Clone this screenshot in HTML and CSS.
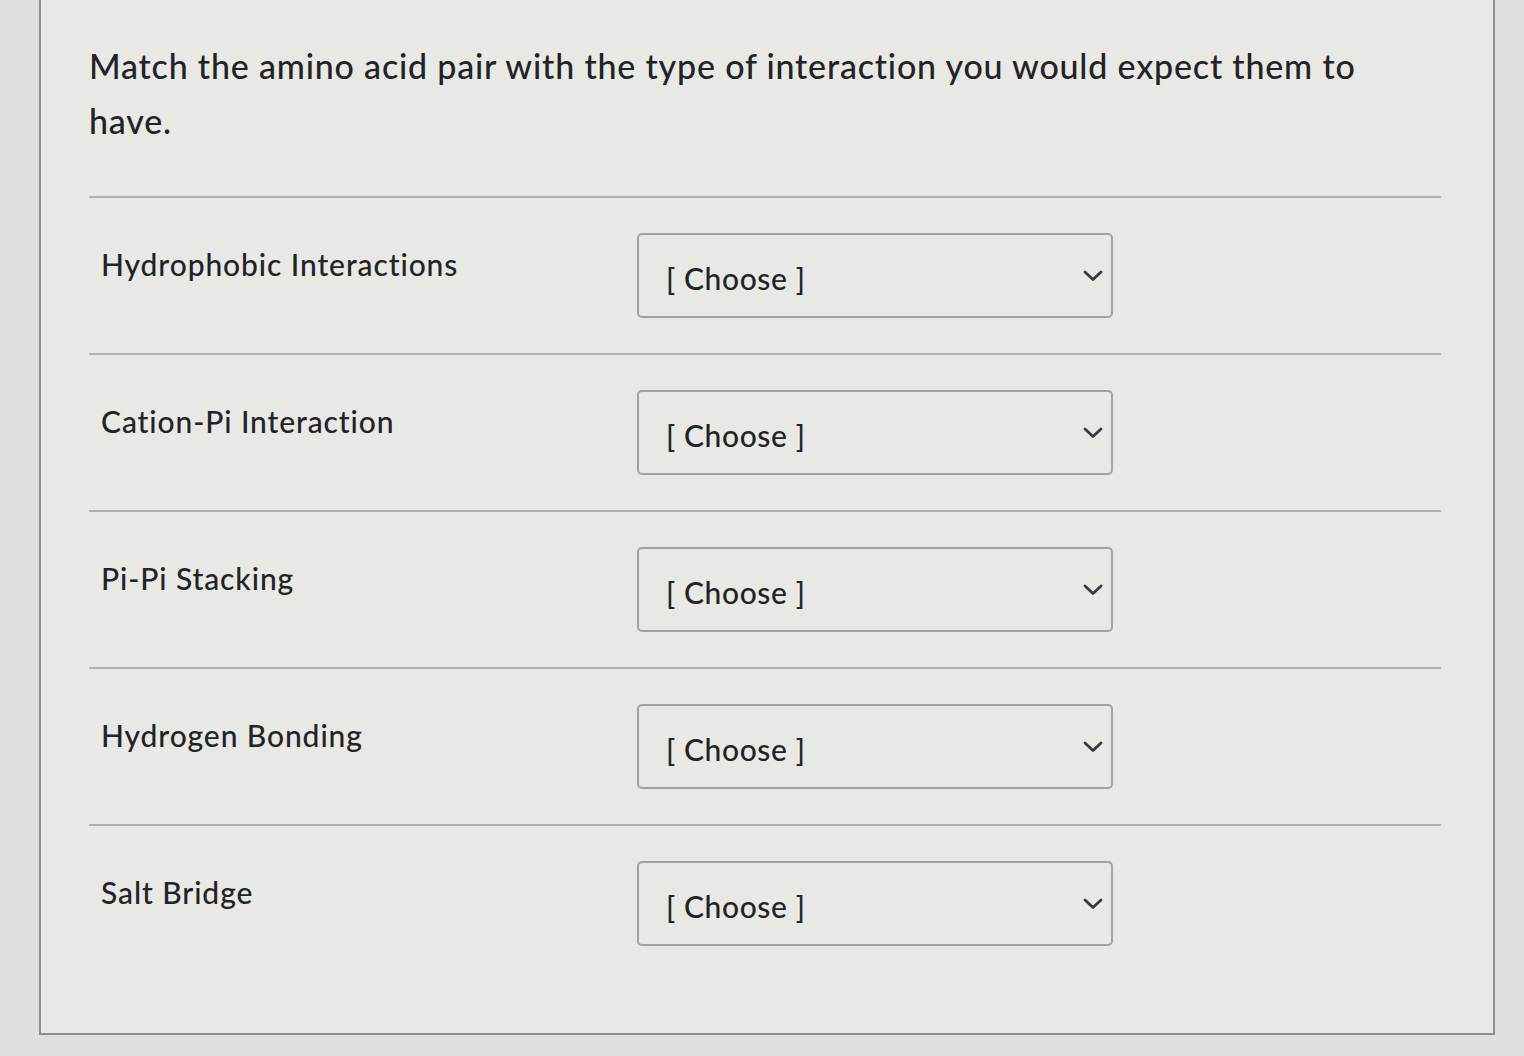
FILE: index.html
```html
<!DOCTYPE html>
<html lang="en">
<head>
<meta charset="utf-8">
<title>Matching question</title>
<link rel="stylesheet" href="styles.css">
</head>
<body>
  <div class="card">
    <div class="question">Match the amino acid pair with the type of interaction you would expect them to have.</div>
    <div class="answers">
      <div class="row">
        <div class="label">Hydrophobic Interactions</div>
        <div class="select"><span class="choose">[ Choose ]</span>
          <svg class="chev" viewBox="0 0 20 12" width="20" height="12"><path d="M2 2 L10 9.5 L18 2" fill="none" stroke="#383a42" stroke-width="2.8" stroke-linecap="round" stroke-linejoin="round"/></svg>
        </div>
      </div>
      <div class="row">
        <div class="label">Cation-Pi Interaction</div>
        <div class="select"><span class="choose">[ Choose ]</span>
          <svg class="chev" viewBox="0 0 20 12" width="20" height="12"><path d="M2 2 L10 9.5 L18 2" fill="none" stroke="#383a42" stroke-width="2.8" stroke-linecap="round" stroke-linejoin="round"/></svg>
        </div>
      </div>
      <div class="row">
        <div class="label">Pi-Pi Stacking</div>
        <div class="select"><span class="choose">[ Choose ]</span>
          <svg class="chev" viewBox="0 0 20 12" width="20" height="12"><path d="M2 2 L10 9.5 L18 2" fill="none" stroke="#383a42" stroke-width="2.8" stroke-linecap="round" stroke-linejoin="round"/></svg>
        </div>
      </div>
      <div class="row">
        <div class="label">Hydrogen Bonding</div>
        <div class="select"><span class="choose">[ Choose ]</span>
          <svg class="chev" viewBox="0 0 20 12" width="20" height="12"><path d="M2 2 L10 9.5 L18 2" fill="none" stroke="#383a42" stroke-width="2.8" stroke-linecap="round" stroke-linejoin="round"/></svg>
        </div>
      </div>
      <div class="row">
        <div class="label">Salt Bridge</div>
        <div class="select"><span class="choose">[ Choose ]</span>
          <svg class="chev" viewBox="0 0 20 12" width="20" height="12"><path d="M2 2 L10 9.5 L18 2" fill="none" stroke="#383a42" stroke-width="2.8" stroke-linecap="round" stroke-linejoin="round"/></svg>
        </div>
      </div>
    </div>
  </div>
</body>
</html>
```

FILE: styles.css
```css
html, body {
  margin: 0;
  padding: 0;
}
body {
  background: #dfdfdc;
  font-family: Lato, "Noto Sans", sans-serif;
  font-weight: 500;
  color: #222327;
  height: 1056px;
  overflow: hidden;
}
.card {
  margin-left: 39px;
  width: 1456px;
  height: 1035px;
  box-sizing: border-box;
  background: #e8e8e5;
  border: 2px solid #8d8d8d;
  border-top: none;
  padding: 0 52px 0 48px;
}
.question {
  padding-top: 38px;
  font-size: 34px;
  letter-spacing: 0.8px;
  line-height: 55px;
  width: 1330px;
}
.answers {
  margin-top: 48px;
}
.row {
  display: flex;
  align-items: flex-start;
  border-top: 2px solid #b0b0ae;
  padding: 35px 0 35px 12px;
}
.label {
  width: 536px;
  flex: none;
  font-size: 30px;
  letter-spacing: 0.9px;
  line-height: 36px;
  padding-top: 13px;
}
.select {
  width: 476px;
  height: 85px;
  box-sizing: border-box;
  border: 2px solid #a2a2a0;
  border-radius: 5px;
  display: flex;
  align-items: center;
  justify-content: space-between;
  padding: 4px 8px 0 27px;
}
.choose {
  font-size: 30px;
  letter-spacing: 0.6px;
}
.chev {
  display: block;
  margin-top: -4px;
}
```
